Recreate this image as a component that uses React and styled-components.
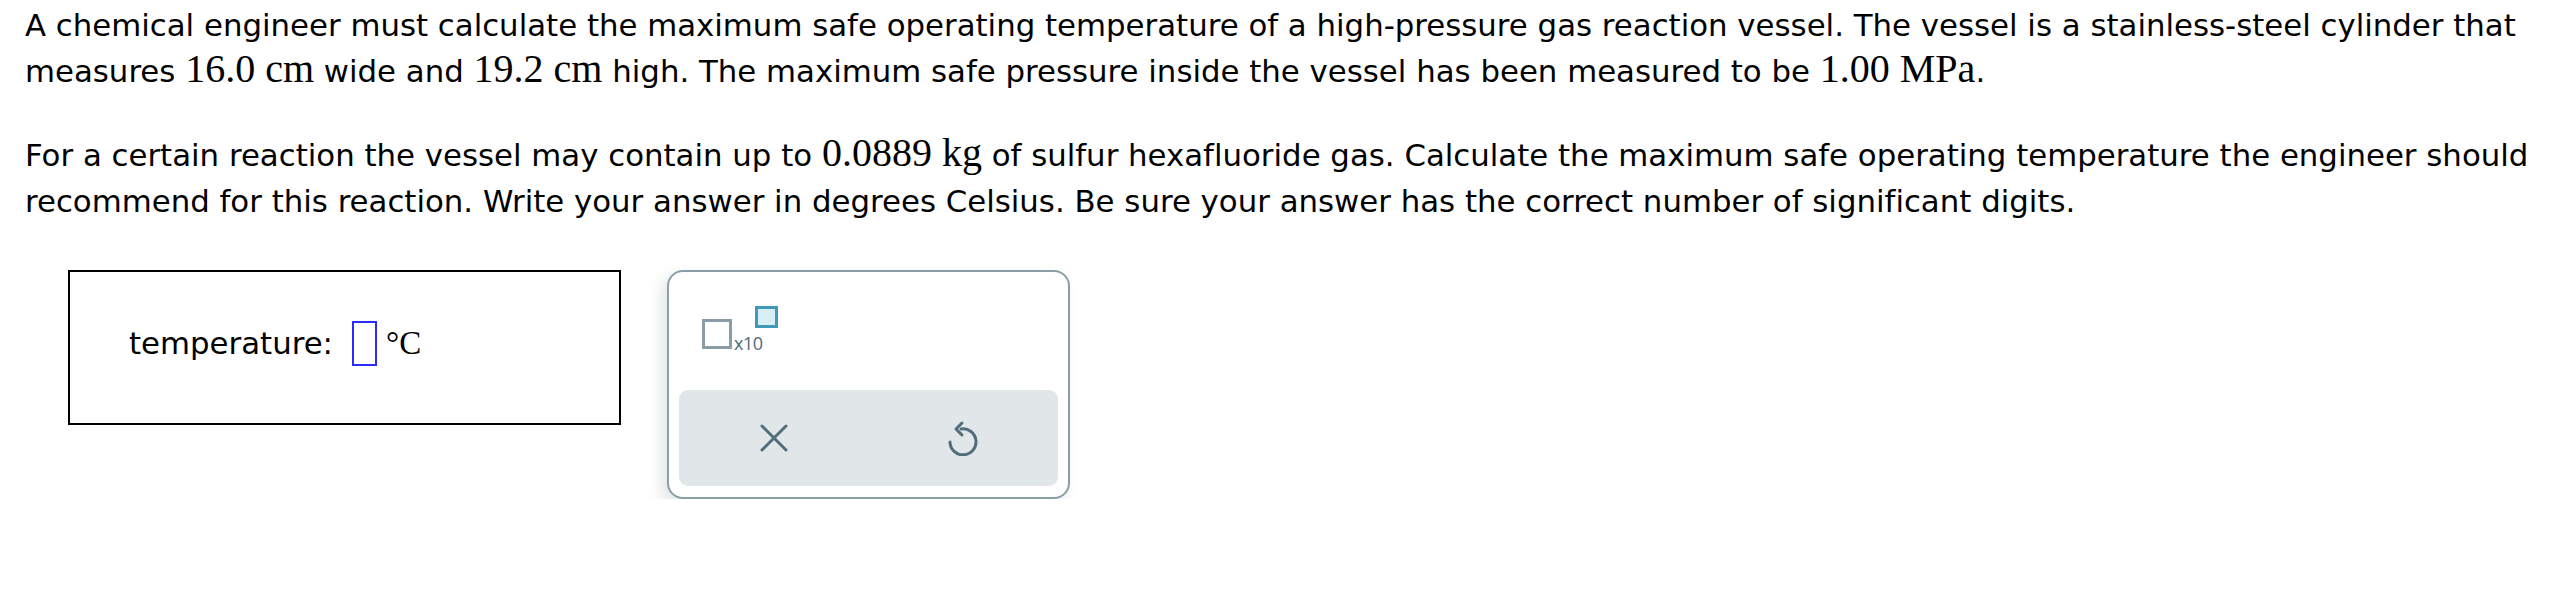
import React from 'react';
import styled, { createGlobalStyle } from 'styled-components';

const Global = createGlobalStyle`
  html, body { margin: 0; padding: 0; background: #fff; }
  body {
    font-family: "DejaVu Sans", Verdana, sans-serif;
    color: #000;
    font-variant-ligatures: none;
    font-feature-settings: "liga" 0, "clig" 0;
  }
`;

const Page = styled.div`
  padding: 2px 0 0 25px;
`;

const Para = styled.p`
  margin: 0 0 ${(p) => p.$gap}px;
  font-size: 30.8px;
  line-height: 46px;
  width: 2522px;
`;

const M = styled.span`
  font-family: "Liberation Serif", "Times New Roman", serif;
  font-size: 40px;
  line-height: 0;
`;

const Row = styled.div`
  display: flex;
  align-items: flex-start;
  gap: 46px;
  margin-left: 43px;
`;

const AnswerBox = styled.div`
  box-sizing: border-box;
  width: 553px;
  height: 155px;
  border: 2px solid #000;
  display: flex;
  align-items: center;
  padding: 0 0 9px 59px;
  font-size: 30.8px;
`;

const Label = styled.span`
  margin-right: 19px;
`;

const Blank = styled.span`
  box-sizing: border-box;
  display: inline-block;
  width: 25px;
  height: 45px;
  border: 2px solid #2b2bff;
  margin-right: 9px;
`;

const Unit = styled.span`
  font-family: "Liberation Serif", "Times New Roman", serif;
  font-size: 33px;
`;

const Palette = styled.div`
  box-sizing: border-box;
  width: 403px;
  height: 229px;
  border: 2px solid #8a9ea7;
  border-radius: 16px;
  background: #fff;
  box-shadow: -6px 6px 14px rgba(40, 60, 70, 0.13);
  padding: 0 10px 11px;
  display: flex;
  flex-direction: column;
`;

const Top = styled.div`
  flex: 1;
  display: flex;
  align-items: flex-start;
  padding: 34px 0 0 23px;
`;

const Sci = styled.div`
  display: flex;
  align-items: flex-start;
`;

const BaseBox = styled.span`
  box-sizing: border-box;
  width: 30px;
  height: 30px;
  margin-top: 13px;
  border: 3px solid #8a9ea7;
`;

const Ten = styled.span`
  font-family: "Open Sans", Roboto, sans-serif;
  font-size: 18px;
  line-height: 18px;
  color: #4f6b77;
  margin-top: 28px;
  margin-left: 2px;
  letter-spacing: -0.5px;
`;

const ExpBox = styled.span`
  box-sizing: border-box;
  width: 23px;
  height: 22px;
  margin-left: -8px;
  border: 3px solid #3e9ab8;
  background: #d6eef4;
`;

const Keys = styled.div`
  height: 96px;
  border-radius: 9px;
  background: #e1e6e9;
  display: flex;
`;

const Key = styled.button`
  flex: 1;
  border: 0;
  background: transparent;
  display: flex;
  align-items: center;
  justify-content: center;
  padding: 0;
  color: #4f6e7a;
`;

export default function App() {
  return (
    <>
      <Global />
      <Page>
        <Para $gap={38}>
          A chemical engineer must calculate the maximum safe operating temperature of a high-pressure gas reaction vessel. The vessel is a stainless-steel cylinder that measures <M>16.0 cm</M> wide and <M>19.2 cm</M> high. The maximum safe pressure inside the vessel has been measured to be <M>1.00 MPa</M>.
        </Para>
        <Para $gap={46}>
          For a certain reaction the vessel may contain up to <M>0.0889 kg</M> of sulfur hexafluoride gas. Calculate the maximum safe operating temperature the engineer should recommend for this reaction. Write your answer in degrees Celsius. Be sure your answer has the correct number of significant digits.
        </Para>
        <Row>
          <AnswerBox>
            <Label>temperature:</Label>
            <Blank />
            <Unit>°C</Unit>
          </AnswerBox>
          <Palette>
            <Top>
              <Sci>
                <BaseBox />
                <Ten>x10</Ten>
                <ExpBox />
              </Sci>
            </Top>
            <Keys>
              <Key aria-label="clear">
                <svg width="28" height="28" viewBox="0 0 28 28" fill="none" stroke="currentColor" strokeWidth="3" strokeLinecap="round">
                  <path d="M2 2 L26 26 M26 2 L2 26" />
                </svg>
              </Key>
              <Key aria-label="undo">
                <svg width="32" height="36" viewBox="0 0 32 36" fill="none" stroke="currentColor" strokeWidth="3" strokeLinecap="round" strokeLinejoin="round">
                  <path d="M14 9 A13 13 0 1 1 3 22" />
                  <path d="M9 9 L15 3 M9 9 L15 15" />
                </svg>
              </Key>
            </Keys>
          </Palette>
        </Row>
      </Page>
    </>
  );
}
